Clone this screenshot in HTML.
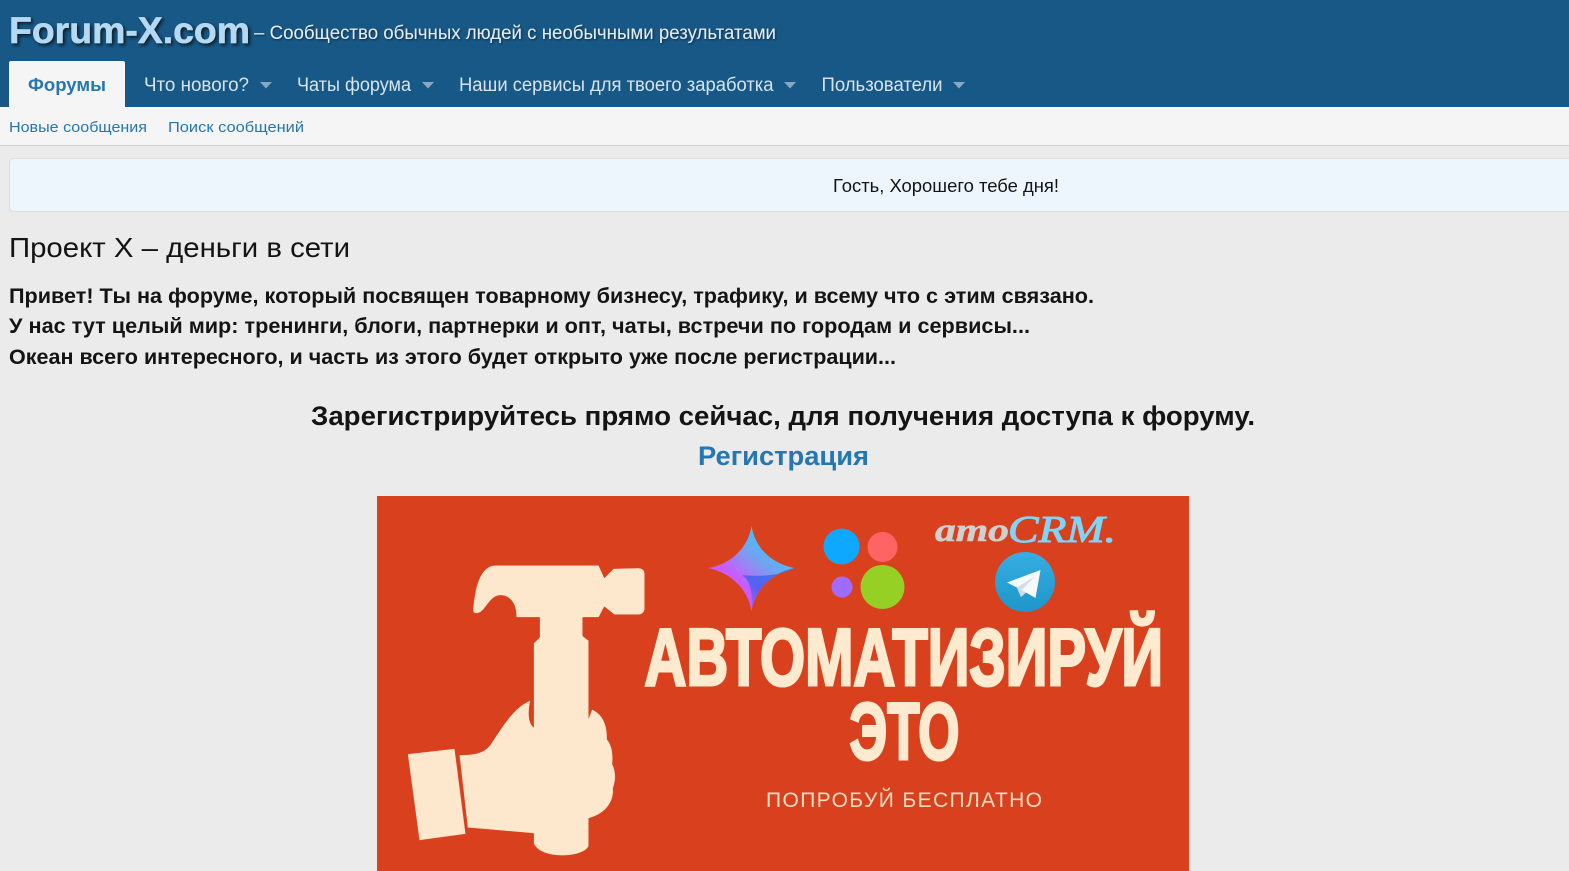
<!DOCTYPE html>
<html lang="ru">
<head>
<meta charset="utf-8">
<title>Forum-X.com</title>
<style>
html,body{margin:0;padding:0;width:1569px;height:871px;overflow:hidden;background:#ebebeb}
svg{position:absolute;left:0;top:0;display:block}
text{font-family:"Liberation Sans",sans-serif}
.b{font-weight:700}
.nav{font-size:19px;fill:#d5e4f0}
.sub{font-size:15px;fill:#2577b1}
.bl{font-size:21px;font-weight:700;fill:#141414}
</style>
</head>
<body>
<svg width="1569" height="871" viewBox="0 0 1569 871" xmlns="http://www.w3.org/2000/svg">
<defs>
<filter id="s1" x="-5%" y="-30%" width="110%" height="170%"><feDropShadow dx="2" dy="2" stdDeviation="1.5" flood-color="#081a28" flood-opacity="1"/></filter>
<filter id="s2" x="-5%" y="-30%" width="110%" height="170%"><feDropShadow dx="1" dy="1" stdDeviation="1" flood-color="#0c2233" flood-opacity=".8"/></filter>
<linearGradient id="star" x1="0.8" y1="0.1" x2="0.2" y2="0.8"><stop offset="0" stop-color="#1fd8ff"/><stop offset=".45" stop-color="#7f9af0"/><stop offset=".75" stop-color="#c85cff"/><stop offset="1" stop-color="#cc5cff"/></linearGradient>
<linearGradient id="star2" x1="1" y1="0" x2="0" y2="1"><stop offset="0" stop-color="#2f7df0"/><stop offset=".6" stop-color="#5a60f0"/><stop offset="1" stop-color="#c85cff"/></linearGradient>
<linearGradient id="tg" x1="0.5" y1="0" x2="0.5" y2="1"><stop offset="0" stop-color="#37aee2"/><stop offset="1" stop-color="#1e96c8"/></linearGradient>
</defs>

<!-- header -->
<rect x="0" y="0" width="1569" height="107" fill="#185886"/>
<text x="9" y="43" class="b" font-size="37" fill="#b5d9f3" stroke="#b5d9f3" stroke-width=".5" textLength="241" lengthAdjust="spacingAndGlyphs" filter="url(#s1)">Forum-X.com</text>
<text x="254" y="39" font-size="19" fill="#e2ecf4" textLength="522" lengthAdjust="spacingAndGlyphs" filter="url(#s2)">– Сообщество обычных людей с необычными результатами</text>

<!-- nav -->
<path d="M9 107V63a2 2 0 0 1 2-2H123a2 2 0 0 1 2 2V107Z" fill="#f5f5f5"/>
<text x="28" y="91" class="b" font-size="18" fill="#2577b1" textLength="78" lengthAdjust="spacingAndGlyphs">Форумы</text>
<text x="144" y="91" class="nav" textLength="105" lengthAdjust="spacingAndGlyphs">Что нового?</text>
<path d="M260 82h12l-6 6.500Z" fill="#8aa8c2"/>
<text x="297" y="91" class="nav" textLength="114" lengthAdjust="spacingAndGlyphs">Чаты форума</text>
<path d="M422 82h12l-6 6.500Z" fill="#8aa8c2"/>
<text x="459" y="91" class="nav" textLength="314.500" lengthAdjust="spacingAndGlyphs">Наши сервисы для твоего заработка</text>
<path d="M784 82h12l-6 6.500Z" fill="#8aa8c2"/>
<text x="821.500" y="91" class="nav" textLength="121" lengthAdjust="spacingAndGlyphs">Пользователи</text>
<path d="M953 82h12l-6 6.500Z" fill="#8aa8c2"/>

<!-- subnav -->
<rect x="0" y="107" width="1569" height="38" fill="#f5f5f5"/>
<rect x="0" y="145" width="1569" height="1" fill="#d0d0d0"/>
<text x="9" y="132" class="sub" textLength="138" lengthAdjust="spacingAndGlyphs">Новые сообщения</text>
<text x="168" y="132" class="sub" textLength="136" lengthAdjust="spacingAndGlyphs">Поиск сообщений</text>

<!-- notice -->
<rect x="9.500" y="158.500" width="1600" height="53" rx="4" fill="#edf6fd" stroke="#dcdcdc"/>
<text x="833" y="192" font-size="18" fill="#141414" textLength="226" lengthAdjust="spacingAndGlyphs">Гость, Хорошего тебе дня!</text>

<!-- content -->
<text x="9" y="257" font-size="28" fill="#141414" textLength="341" lengthAdjust="spacingAndGlyphs">Проект X – деньги в сети</text>
<text x="9" y="303" class="bl" textLength="1085" lengthAdjust="spacingAndGlyphs">Привет! Ты на форуме, который посвящен товарному бизнесу, трафику, и всему что с этим связано.</text>
<text x="9" y="333" class="bl" textLength="1021" lengthAdjust="spacingAndGlyphs">У нас тут целый мир: тренинги, блоги, партнерки и опт, чаты, встречи по городам и сервисы...</text>
<text x="9" y="364" class="bl" textLength="887" lengthAdjust="spacingAndGlyphs">Океан всего интересного, и часть из этого будет открыто уже после регистрации...</text>
<text x="311" y="425" class="b" font-size="27" fill="#141414" textLength="944" lengthAdjust="spacingAndGlyphs">Зарегистрируйтесь прямо сейчас, для получения доступа к форуму.</text>
<text x="698" y="465" class="b" font-size="27" fill="#2577b1" textLength="171" lengthAdjust="spacingAndGlyphs">Регистрация</text>

<!-- banner -->
<rect x="377" y="496" width="812" height="375" fill="#d9411e"/>

<!-- hammer and hand -->
<g transform="translate(377 550) scale(.33333)" fill="#fee8cd" stroke="#d8300f" stroke-width="1">
<path d="M288 180C293 120 306 48 355 46L665 46L682 84L710 56L785 54Q803 56 803 72L803 178Q800 193 785 194L712 194L682 170L665 202L617 202L617 258L635 272L635 505L645 478C670 490 692 515 690 568C708 590 708 620 706 642C718 665 716 695 708 715C712 750 690 790 635 805L635 888C620 925 490 930 470 880L470 850L272 833L247 615C290 615 320 610 340 585C370 540 410 470 460 452C452 490 455 520 470 532L470 280L488 262L488 202L418 202C418 160 400 136 370 136C335 136 325 190 298 190Q288 190 288 180Z"/>
<path d="M92 612L233 596L266 852L127 871Z"/>
</g>

<!-- star -->
<path d="M751.500 526C755 548 772 564 794.500 568C772 573 755 589 751.500 611C748 589 731 573 708.500 568C731 564 748 548 751.500 526Z" fill="url(#star)"/>
<path d="M794.500 568C772 573 755 589 751.500 611C753 592 750 580 742 575C762 577 782 575 794.500 568Z" fill="url(#star2)"/>

<!-- dots -->
<circle cx="841.500" cy="546.500" r="18" fill="#0ea9ff"/>
<circle cx="882.500" cy="547" r="15" fill="#ff6464"/>
<circle cx="842" cy="587" r="10.500" fill="#a06cff"/>
<circle cx="882.500" cy="587" r="22" fill="#97d024"/>

<!-- amoCRM -->
<text x="935" y="541" font-size="33" font-weight="700" font-style="italic" stroke="#d0d0d0" stroke-width=".6" style="font-family:'Liberation Serif',serif" fill="#d0d0d0" textLength="74" lengthAdjust="spacingAndGlyphs">amo</text>
<text x="1008" y="542" font-size="38" font-style="italic" style="font-family:'Liberation Serif',serif" fill="#7fd4f8" stroke="#7fd4f8" stroke-width="1" textLength="108" lengthAdjust="spacingAndGlyphs">CRM.</text>

<!-- telegram -->
<circle cx="1025" cy="582" r="30" fill="url(#tg)"/>
<path d="M1040.500 570L1007 582.500L1017 587.500L1021 597L1026 592.500L1035.500 598Z" fill="#f6fafc"/>
<path d="M1017 587.500L1021 597L1026 592.500L1022 590L1034 577Z" fill="#cfdde6"/>

<!-- banner text -->
<text x="644.500" y="685" class="b" font-size="81" fill="#feeacf" stroke="#feeacf" stroke-width="3" textLength="518.500" lengthAdjust="spacingAndGlyphs">АВТОМАТИЗИРУЙ</text>
<text x="849.500" y="759" class="b" font-size="81" fill="#feeacf" stroke="#feeacf" stroke-width="3" textLength="110" lengthAdjust="spacingAndGlyphs">ЭТО</text>
<text x="766" y="807" font-size="21" fill="#fcdcc0" textLength="276">ПОПРОБУЙ БЕСПЛАТНО</text>
</svg>
</body>
</html>
